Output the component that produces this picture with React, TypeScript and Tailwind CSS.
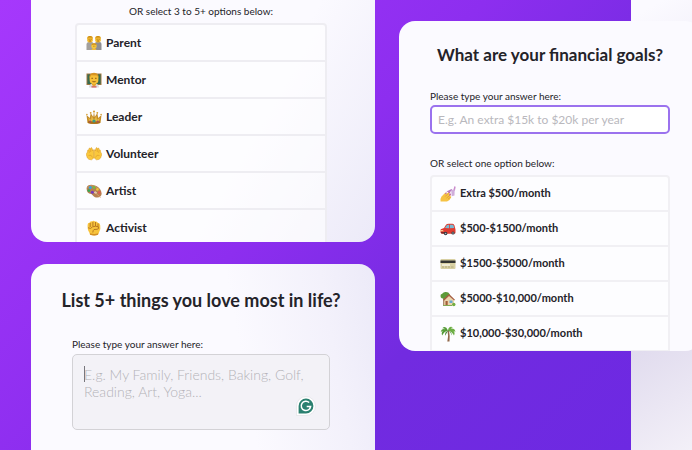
import type { ReactNode } from "react";

type Option = { label: string; icon: ReactNode };

function ParentIcon() {
  return (
    <svg viewBox="0 0 16 16" className="size-4 shrink-0" aria-hidden="true">
      <path d="M0.5 15V9.5Q0.5 7 3 7h2.500Q7.500 7 7.500 9v6Z" fill="#a3a09c" />
      <path d="M8.500 15V9.500Q8.500 7 11 7h2.500Q15.500 7 15.500 9v6Z" fill="#8f8f94" />
      <rect x="1.200" y="1" width="5.600" height="6.500" rx="2.300" fill="#f2b92f" />
      <rect x="9.200" y="1" width="5.600" height="6.500" rx="2.300" fill="#f2b92f" />
      <path d="M1.200 3.500Q1.400 0.800 4 1q2.700-.2 2.800 2.500L5.500 2.600H2.600Z" fill="#c98a18" />
      <path d="M9.200 3.500Q9.400 0.800 12 1q2.700-.2 2.800 2.500l-1.300-.9h-2.900Z" fill="#c98a18" />
      <path d="M2.700 4.300h.8M4.700 4.300h.8M10.700 4.300h.8M12.700 4.300h.8M3.200 6h1.800M11.200 6H13" stroke="#865410" strokeWidth=".7" />
      <circle cx="8" cy="11" r="2.700" fill="#f6c63c" />
      <path d="M5.300 10.500Q5.700 8 8 8.200q2.300-.2 2.700 2.300L9.500 9.700h-3Z" fill="#cd8d1b" />
      <path d="M5.500 15q0-1.800 2.500-1.800t2.500 1.800Z" fill="#efb936" />
      <path d="M7 11.200h.6M8.600 11.200h.6" stroke="#76511b" strokeWidth=".7" />
    </svg>
  );
}

function MentorIcon() {
  return (
    <svg viewBox="0 0 16 16" className="size-4 shrink-0" aria-hidden="true">
      <rect x=".5" y="1.500" width="15" height="11.500" fill="#a77a42" />
      <rect x="1.400" y="2.400" width="13.200" height="9.700" fill="#376b51" />
      <path d="M3 15.500q0-3.300 3-3.800h4q3 .5 3 3.800Z" fill="#d9dce0" />
      <path d="M6.200 11h3.600l.4 2L8 14.500 5.800 13Z" fill="#e5a42d" />
      <path d="M5.500 14.300h5v1.200h-5Z" fill="#d65349" />
      <rect x="3.600" y="1.500" width="8.800" height="10.500" rx="4" fill="#f6bf37" />
      <path d="M3.500 6Q3 1 8 .8 13 1 12.500 6l-1.200-2.400-6-.3Z" fill="#d69323" />
      <path d="M5.400 6.300h1.600M9 6.300h1.600M6.400 9.400q1.600 1 3.200 0" fill="none" stroke="#78460e" strokeWidth=".8" />
    </svg>
  );
}

function CrownIcon() {
  return (
    <svg viewBox="0 0 16 16" className="size-4 shrink-0" aria-hidden="true">
      <path d="M1.500 14 .5 6l3.300 3L4.700 4l2.500 4L8 2.500l.8 5.500 2.500-4 .9 5 3.300-3-1 8Q8 16.200 1.500 14Z" fill="#c48c26" />
      <path d="M3 12 2.300 8.800l2.700 2 .6-4 2.400 4 2.400-4 .6 4 2.700-2L13 12Z" fill="#e6b843" />
      <path d="M2 12.200q6 1.500 12 0v1.700q-6 1.700-12 0Z" fill="#a96c1a" />
      <circle cx="8" cy="12" r="1.600" fill="#379a86" />
      <circle cx="4.200" cy="12.500" r="1" fill="#a84c64" />
      <circle cx="11.800" cy="12.500" r="1" fill="#a84c64" />
      <g fill="#d39b2b">
        <circle cx=".9" cy="5.500" r=".8" />
        <circle cx="4.700" cy="3.800" r=".9" />
        <circle cx="8" cy="2.400" r="1" />
        <circle cx="11.300" cy="3.800" r=".9" />
        <circle cx="15.100" cy="5.500" r=".8" />
      </g>
    </svg>
  );
}

function PalmsIcon() {
  return (
    <svg viewBox="0 0 16 16" className="size-4 shrink-0" aria-hidden="true">
      <g fill="#fac83d" stroke="#d99a27" strokeWidth=".5">
        <path d="M7.800 8.500V5.500Q7.500 3 6.800 3.500L6.500 5 6 2Q5 1 4.700 2.500L4 2.200Q3 1.500 2.900 3.200L2.600 4Q1.400 3.500 1.500 5.300L1 7Q.2 7.200.4 9l1 3Q2.500 14 5.500 13.800L7.800 12Z" />
        <path d="M8.200 8.500V5.500Q8.500 3 9.200 3.500L9.500 5l.5-3q1-1 1.300.5l.7-.3q1-.7 1.100 1l.3.800q1.200-.5 1.100 1.300l.5 1.700q.8.200.6 2l-1 3q-1.100 2-4.100 1.800L8.200 12Z" />
      </g>
      <path d="M4.700 3v3M2.900 4.300l.5 2.500M11.300 3v3M13.100 4.300l-.5 2.500M2.500 9.500q3-1.500 4 2M13.500 9.500q-3-1.500-4 2" fill="none" stroke="#db9a28" strokeWidth=".6" />
    </svg>
  );
}

function PaletteIcon() {
  return (
    <svg viewBox="0 0 16 16" className="size-4 shrink-0" aria-hidden="true">
      <path d="M.6 5Q1.300 1.700 5.500 1.800q5.500.3 8.500 4.300 3 4.500.6 7.200-2.300 2-5.600.9-1.500-.6-2.600-2.200-.8-1.300-2.600-1.300Q.5 10 .6 5Z" fill="#b58050" />
      <path d="M1.500 5Q2.500 2.600 5.700 2.700q4.600.3 7.500 3.900" fill="none" stroke="#d0a26d" strokeWidth=".7" />
      <path d="M8.500 8.800q1.200-.6 2 .5t-.3 1.500q-1.200 0-1.700-.8t0-1.200Z" fill="#f4ebe2" />
      <circle cx="2.900" cy="7.600" r="1.400" fill="#35a853" />
      <circle cx="4.300" cy="4.600" r="1.500" fill="#35a3df" />
      <circle cx="8" cy="4.400" r="1.300" fill="#75bc42" />
      <circle cx="11.400" cy="6.400" r="1.300" fill="#f0c335" />
      <circle cx="13.300" cy="9.500" r="1.300" fill="#e65650" />
      <circle cx="6.300" cy="9.300" r="1.500" fill="#7439bd" />
      <path d="m9 9.500 5.500 5" stroke="#e09a6c" strokeWidth=".9" />
    </svg>
  );
}

function FistIcon() {
  return (
    <svg viewBox="0 0 16 16" className="size-4 shrink-0" aria-hidden="true">
      <path d="M1.600 5Q1.500 2.700 3.600 2.800 4 .9 6 1.400 7.500.2 9 1.500q2-.5 2.700 1.300 2.200-.1 2.500 2.500.8 4-1 6.600L12 14.800Q8 16 4 14.700l-.8-2.500Q1.300 10 1.600 5Z" fill="#f7c33c" />
      <path d="M4.200 3v4M6.900 2v4M9.500 2v4M12 3.500V7M2 7.800q3 1.700 4.500-1 3.500-1.300 6 .2 1 2-1.500 2.300L8 9.500q-1 .7-1.200 3" fill="none" stroke="#a86619" strokeWidth=".8" />
      <path d="M4 13.200q4 1.600 8.300.1L12 14.800Q8 16 4 14.700Z" fill="#d18e27" />
    </svg>
  );
}

function NailsIcon() {
  return (
    <svg viewBox="0 0 16 16" className="size-4 shrink-0" aria-hidden="true">
      <path d="M.6 15.500q-.5-3 .9-5L5 7q1.300-1 1.500.2L5.800 8.500l3-2.500q1.300-.8 1.400.5L9.200 8.300q1.800-.8 1.500.7l-.8 1.400q1.600-.5 1.300.8-1 3.100-4.200 4.300Z" fill="#f6c344" />
      <path d="m5.200 10.500 3-3M6.500 12l3.200-2.500M8 13.200l2.500-2" stroke="#cf8f31" strokeWidth=".6" />
      <path d="m8.200 6.500 1.100-1.200q1.200-.4 1 .9L9.200 7.500ZM9 8.600l1.300-1q1.200 0 .6 1.200L9.700 9.900ZM5 7.500l1-1q1-.2.8.8l-1 1Z" fill="#bd66ae" />
      <path d="m6.500 5.500 5-2.500 1 1.300L9 6.500Z" fill="#b77ac0" />
      <path d="M13.300 4.300 14.300.3l1.400.4-.8 4.300Z" fill="#c98acb" />
      <path d="m11.200 4 3.500-.5-.2 6-2.800.8Z" fill="#cfaedb" />
    </svg>
  );
}

function CarIcon() {
  return (
    <svg viewBox="0 0 16 16" className="size-4 shrink-0" aria-hidden="true">
      <path d="M.7 8.300 4 7l2-3.300Q7 2.700 9 2.800h3.500Q14 3 14.500 4.500l1 4v3.200q-.2 1-1.300 1H1.800Q.5 12.400.5 11Z" fill="#df3c31" />
      <path d="m5 7 1.800-2.700Q7.300 3.700 9 3.800V7.200ZM9.800 3.800h2.600q1 .1 1.300 1.100l.5 2.200-4.400.1Z" fill="#79b9d3" />
      <path d="M.6 9h2L4 10.300H.6Z" fill="#f7c98f" />
      <path d="M.6 11h4.500v1.500H1.500Z" fill="#7c2727" />
      <circle cx="5.600" cy="12.500" r="1.800" fill="#343b42" />
      <circle cx="13" cy="12" r="1.600" fill="#343b42" />
      <circle cx="5.600" cy="12.500" r=".8" fill="#aeb5b9" />
      <circle cx="13" cy="12" r=".7" fill="#aeb5b9" />
    </svg>
  );
}

function CardIcon() {
  return (
    <svg viewBox="0 0 16 16" className="size-4 shrink-0" aria-hidden="true">
      <rect x=".5" y="3" width="15" height="10" rx="1" fill="#d8d0a3" />
      <path d="M.5 4.500h15V7H.5Z" fill="#343532" />
      <path d="M2 8.300h8v1.500H2Z" fill="#f8f5e6" />
      <path d="M2 11h2M5 11h2M8 11h2M11 11h2.500" stroke="#a89e72" strokeWidth=".8" />
    </svg>
  );
}

function HouseIcon() {
  return (
    <svg viewBox="0 0 16 16" className="size-4 shrink-0" aria-hidden="true">
      <path d="M3.300 5h1.500v9H3.300Z" fill="#8b5934" />
      <path d="M.5 5Q.3 3.200 2.200 2.700 3.500.8 6 1.100q2.800 0 3.500 1.800Q11 4.300 9.500 5.700L5 8 1.800 7.200Q.6 6.700.5 5Z" fill="#5c9b39" />
      <path d="M4.200 8.500 9 4l5 4.700v5.800H4.200Z" fill="#ead5ac" />
      <path d="M3 8.800 9 3l6 5.700-.8.900L9 5 4 9.800Z" fill="#a65d43" />
      <path d="M5.500 10h2.200v4.500H5.500Z" fill="#a35e39" />
      <path d="M9.500 9.500h3V12h-3Z" fill="#68a8cf" />
      <circle cx="13.800" cy="13.500" r="1.700" fill="#72ad42" />
      <path d="M3 14h9v1H3Z" fill="#84a954" />
    </svg>
  );
}

function PalmTreeIcon() {
  return (
    <svg viewBox="0 0 16 16" className="size-4 shrink-0" aria-hidden="true">
      <path d="M7.500 4.500 9 4.400Q10 9 9.500 15.500H7.300Q8.800 9.500 7.500 4.500Z" fill="#916849" />
      <path d="M8 4.500Q5.500-.8 2.300 2.200q2-.2 2.700 1Q1.300 2.500.8 6l2-1.300Q1 7 2.200 9.400 4 5.500 8 4.500Z" fill="#559b37" />
      <path d="M8 4.500q.8-5.100 5-3.300-1.800.3-2 1.400 4-.4 4.400 3.400l-2-1.300q2 2 .6 4.700Q12 5.500 8 4.500Z" fill="#6cae43" />
      <path d="M8 4.500Q4.500 6 5.300 9.700 6.500 7 8.300 4.500q2.500 1.500 3 5 1.200-3.500-3.300-5Z" fill="#42852f" />
    </svg>
  );
}

function GrammarlyBadge() {
  return (
    <svg viewBox="0 0 20 20" className="absolute right-3.5 bottom-3.5 size-5" aria-hidden="true">
      <path d="M10 .5a9.500 9.500 0 0 1 0 19H.5V10A9.500 9.500 0 0 1 10 .5Z" fill="#fff" stroke="#dedee3" strokeWidth=".6" />
      <path d="M10 2.600a7.400 7.400 0 0 1 0 14.800H2.600V10A7.400 7.400 0 0 1 10 2.600Z" fill="#2b8070" />
      <path d="M13.200 6.500A4.700 4.700 0 1 0 14.600 10.600H10.700M14.600 10.600l-1.200 2.600" fill="none" stroke="#fff" strokeWidth="1.500" />
    </svg>
  );
}

const roles: Option[] = [
  { label: "Parent", icon: <ParentIcon /> },
  { label: "Mentor", icon: <MentorIcon /> },
  { label: "Leader", icon: <CrownIcon /> },
  { label: "Volunteer", icon: <PalmsIcon /> },
  { label: "Artist", icon: <PaletteIcon /> },
  { label: "Activist", icon: <FistIcon /> },
];

const incomes: Option[] = [
  { label: "Extra $500/month", icon: <NailsIcon /> },
  { label: "$500-$1500/month", icon: <CarIcon /> },
  { label: "$1500-$5000/month", icon: <CardIcon /> },
  { label: "$5000-$10,000/month", icon: <HouseIcon /> },
  { label: "$10,000-$30,000/month", icon: <PalmTreeIcon /> },
];

function RoleCard() {
  return (
    <section className="overflow-hidden rounded-b-2xl bg-[linear-gradient(120deg,#fbfaff_60%,#eceaf8)] px-11 pt-1">
      <p className="mr-1 text-center text-[10px] leading-[14px]">OR select 3 to 5+ options below:</p>
      <ul className="mt-[5px] -mb-[5px] mr-1 divide-y-2 divide-[#eeedf2] rounded-t-[4px] border-2 border-[#eeedf2] bg-white/60">
        {roles.map((o) => (
          <li key={o.label}>
            <button type="button" className="flex h-[35px] w-full items-center gap-1 px-[9px] text-xs font-bold">
              {o.icon}
              {o.label}
            </button>
          </li>
        ))}
      </ul>
    </section>
  );
}

function LoveCard() {
  return (
    <section className="flex-1 rounded-t-2xl bg-[linear-gradient(80deg,#fbfaff_60%,#f3f1fb_85%,#eceaf8)] px-[41px] pt-6">
      <h2 className="-mr-7 -ml-8 text-center text-lg leading-6 font-bold">List 5+ things you love most in life?</h2>
      <label htmlFor="loves" className="mt-6 block text-[10px] leading-4">
        Please type your answer here:
      </label>
      <div className="relative mt-0.5 mr-1">
        <textarea
          id="loves"
          rows={3}
          placeholder="E.g. My Family, Friends, Baking, Golf, Reading, Art, Yoga..."
          className="block h-[76px] w-full resize-none rounded-[5px] border border-[#d3d2d6] bg-[#f3f2f7] px-[11px] py-[11px] text-sm leading-[17px] font-light outline-none placeholder:text-[#b4b3b8]"
        />
        <span className="absolute top-3 left-3 h-4 w-px bg-[#77767c]" />
        <GrammarlyBadge />
      </div>
    </section>
  );
}

function GoalCard() {
  return (
    <section className="-mr-[9px] overflow-hidden rounded-2xl bg-[#fbfaff] px-[31px] pt-[22px]">
      <h2 className="-mx-4 text-center text-[17px] leading-6 font-bold">What are your financial goals?</h2>
      <label htmlFor="goal" className="mt-[21px] block text-[10px] leading-4">
        Please type your answer here:
      </label>
      <input
        id="goal"
        type="text"
        placeholder="E.g. An extra $15k to $20k per year"
        className="mt-px block h-[29px] w-full rounded-[5px] border-2 border-[#9b72ee] bg-white px-1.5 text-xs outline-none placeholder:text-[#b9b8bd]"
      />
      <p className="mt-[21px] text-[10px] leading-4">OR select one option below:</p>
      <ul className="mt-1 -mb-px divide-y-2 divide-[#f1f0f4] rounded-t-[4px] border-2 border-[#f1f0f4] bg-white/60">
        {incomes.map((o) => (
          <li key={o.label}>
            <button type="button" className="flex h-[33px] w-full items-center gap-1 px-2 text-[11px] font-bold">
              {o.icon}
              {o.label}
            </button>
          </li>
        ))}
      </ul>
    </section>
  );
}

export default function App() {
  return (
    <div className="overflow-hidden bg-[linear-gradient(150deg,#fbfaff_45%,#d9d3ea_78%,#f3f0f8)] font-['Lato',sans-serif] text-[#242329]">
      <main className="grid min-h-screen grid-cols-[344fr_293fr] items-start gap-6 bg-[linear-gradient(135deg,#a638fc,#8d2eef_45%,#722be0_70%,#6d29e2)] bg-[length:calc(100%-61px)_100%] bg-no-repeat pl-[31px]">
        <div className="flex min-h-screen flex-col gap-[22px]">
          <RoleCard />
          <LoveCard />
        </div>
        <div className="pt-[21px]">
          <GoalCard />
        </div>
      </main>
    </div>
  );
}
